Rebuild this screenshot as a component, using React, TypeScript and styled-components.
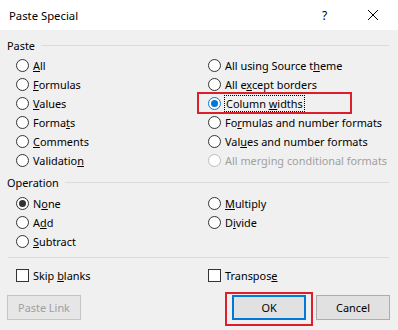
import React from "react";
import styled, { createGlobalStyle } from "styled-components";

const GlobalStyle = createGlobalStyle`
    html, body {
        margin: 0;
        padding: 0;
        background: #f0f0f0;
    }
`
const Dialog = styled.div`
    width: 398px;
    height: 330px;
    background: #f0f0f0;
    font-family: "Noto Sans", "Open Sans", sans-serif;
    font-size: 10.9px;
    color: #000;
    overflow: hidden;
    position: relative;
`
const TitleBar = styled.div`
    height: 30px;
    background: #fff;
    display: flex;
    align-items: center;
    padding-left: 9px;
    box-sizing: border-box;
`
const Title = styled.div`
    flex: 1;
    font-size: 11.3px;
    margin-top: 1px;
`
const HelpMark = styled.div`
    width: 10px;
    font-size: 12px;
    margin-right: 35px;
`
const CloseBtn = styled.div`
    width: 12px;
    height: 12px;
    margin-right: 19px;
    display: flex;
`
const Body = styled.div`
    padding: 0 7px 0 7px;
`
const SectionHead = styled.div<{ $top: number }>`
    display: flex;
    align-items: center;
    height: 16px;
    margin-top: ${p => p.$top}px;
    gap: 6px;
    &::after {
        content: "";
        flex: 1;
        height: 1px;
        background: #dcdcdc;
        margin-right: 2px;
    }
`
const OptionGrid = styled.div<{ $top: number; $rows: number }>`
    display: grid;
    grid-template-columns: 192px 1fr;
    grid-auto-flow: column;
    grid-template-rows: ${p => `repeat(${p.$rows}, 19px)`};
    padding-left: 9px;
    margin-top: ${p => p.$top}px;
`
const Option = styled.label<{ $disabled?: boolean; $mark?: boolean }>`
    display: flex;
    align-items: center;
    gap: 4px;
    position: relative;
    color: ${p => (p.$disabled ? "#a0a0a0" : "#000")};
    white-space: nowrap;
    ${p => p.$mark && `
        &::after {
            content: "";
            position: absolute;
            left: -11px;
            top: -2px;
            width: 151px;
            height: 18px;
            border: 2px solid #dc1f2a;
        }
    `}
`
const RadioCircle = styled.span<{ $checked?: boolean; $focus?: boolean; $disabled?: boolean }>`
    width: 11px;
    height: 11px;
    border-radius: 50%;
    border: 1px solid ${p => (p.$disabled ? "#bcbcbc" : p.$focus ? "#0078d7" : "#333")};
    background: #fff;
    display: flex;
    align-items: center;
    justify-content: center;
    flex-shrink: 0;
    &::before {
        content: "";
        display: ${p => (p.$checked ? "block" : "none")};
        width: 7px;
        height: 7px;
        border-radius: 50%;
        background: ${p => (p.$focus ? "#0078d7" : "#333")};
    }
`
const CheckBox = styled.span`
    width: 11px;
    height: 11px;
    border: 1px solid #333;
    background: #fff;
    flex-shrink: 0;
`
const FocusText = styled.span`
    outline: 1px dotted #000;
    outline-offset: 0px;
    padding: 0 1px;
`
const Separator = styled.div`
    height: 1px;
    background: #dcdcdc;
    margin: 6px 2px 0 1px;
`
const CheckRow = styled.div`
    display: grid;
    grid-template-columns: 192px 1fr;
    padding-left: 9px;
    height: 19px;
    margin-top: 8px;
`
const ButtonRow = styled.div`
    display: flex;
    align-items: center;
    gap: 10px;
    margin-top: 10px;
    padding-right: 1px;
`
const Button = styled.div<{ $primary?: boolean; $disabled?: boolean; $mark?: boolean }>`
    width: 74px;
    height: 25px;
    box-sizing: border-box;
    display: flex;
    align-items: center;
    justify-content: center;
    background: ${p => (p.$disabled ? "#e6e6e6" : "#e1e1e1")};
    border: ${p => (p.$primary ? "2px solid #0078d7" : p.$disabled ? "1px solid #c4c4c4" : "1px solid #adadad")};
    color: ${p => (p.$disabled ? "#a0a0a0" : "#000")};
    position: relative;
    ${p => p.$mark && `
        &::after {
            content: "";
            position: absolute;
            left: -9px;
            top: -5px;
            right: -9px;
            bottom: -8px;
            border: 2px solid #dc1f2a;
        }
    `}
`
const Spacer = styled.div`
    flex: 1;
`

const Radio = ({ label, checked, focus, disabled, mark }: any) => (
    <Option $disabled={disabled} $mark={mark}>
        <RadioCircle $checked={checked} $focus={focus} $disabled={disabled} />
        {focus ? <FocusText>{label}</FocusText> : <span>{label}</span>}
    </Option>
)

const Check = ({ label }: any) => (
    <Option>
        <CheckBox />
        <span>{label}</span>
    </Option>
)

const App = () => {
    return (
        <Dialog>
            <GlobalStyle />
            <TitleBar>
                <Title>Paste Special</Title>
                <HelpMark>?</HelpMark>
                <CloseBtn>
                    <svg width="12" height="12" viewBox="0 0 12 12">
                        <path d="M1 1 L11 11 M11 1 L1 11" stroke="#000" strokeWidth="1" />
                    </svg>
                </CloseBtn>
            </TitleBar>
            <Body>
                <SectionHead $top={7}>Paste</SectionHead>
                <OptionGrid $top={3} $rows={6}>
                    <Radio label={<><u>A</u>ll</>} />
                    <Radio label={<><u>F</u>ormulas</>} />
                    <Radio label={<><u>V</u>alues</>} />
                    <Radio label={<>Forma<u>t</u>s</>} />
                    <Radio label={<><u>C</u>omments</>} />
                    <Radio label={<>Validatio<u>n</u></>} />
                    <Radio label={<>All using Source t<u>h</u>eme</>} />
                    <Radio label={<>All e<u>x</u>cept borders</>} />
                    <Radio label={<>Column <u>w</u>idths</>} checked focus mark />
                    <Radio label={<>Fo<u>r</u>mulas and number formats</>} />
                    <Radio label={<>Val<u>u</u>es and number formats</>} />
                    <Radio label="All merging conditional formats" disabled />
                </OptionGrid>
                <SectionHead $top={4}>Operation</SectionHead>
                <OptionGrid $top={4} $rows={3}>
                    <Radio label={<>N<u>o</u>ne</>} checked />
                    <Radio label={<>A<u>d</u>d</>} />
                    <Radio label={<><u>S</u>ubtract</>} />
                    <Radio label={<><u>M</u>ultiply</>} />
                    <Radio label={<>D<u>i</u>vide</>} />
                </OptionGrid>
                <Separator />
                <CheckRow>
                    <Check label={<>Skip <u>b</u>lanks</>} />
                    <Check label={<>Transpos<u>e</u></>} />
                </CheckRow>
                <ButtonRow>
                    <Button $disabled>Paste Link</Button>
                    <Spacer />
                    <Button $primary $mark>OK</Button>
                    <Button>Cancel</Button>
                </ButtonRow>
            </Body>
        </Dialog>
    )
}

export default App
